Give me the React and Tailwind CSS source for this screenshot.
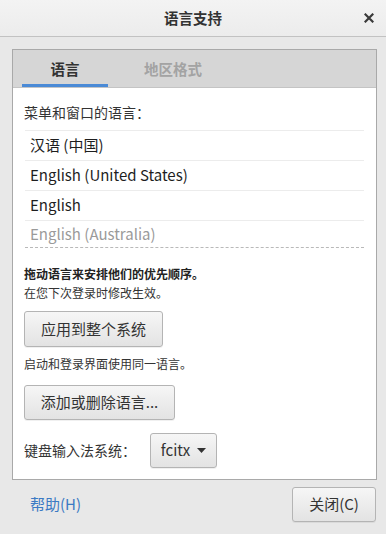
import React from "react";

const font = { fontFamily: '"Noto Sans CJK SC", "Noto Sans", sans-serif' };

function GtkButton({ className = "", children }) {
  return (
    <div
      className={
        "flex items-center justify-center rounded-[3px] border border-[#b4b4b4] bg-gradient-to-b from-[#f6f6f6] to-[#e3e3e3] text-[15px] text-[#333] shadow-[0_1px_0_rgba(0,0,0,0.06)] " +
        className
      }
    >
      {children}
    </div>
  );
}

export default function App() {
  const rows = ["汉语 (中国)", "English (United States)", "English"];
  return (
    <div style={font} className="w-[386px] h-[534px] bg-[#e8e8e8] flex flex-col text-[#2e2e2e] overflow-hidden">
      {/* title bar */}
      <div className="h-[37px] shrink-0 grid grid-cols-[1fr_auto_1fr] items-center border-b border-[#c2c2c2] bg-gradient-to-b from-[#f3f3f3] to-[#ececec]">
        <div />
        <div className="text-[14.5px] font-bold text-[#333] leading-none pt-[1px]">语言支持</div>
        <div className="flex justify-end pr-[12px]">
          <svg width="10" height="10" viewBox="0 0 10 10">
            <path d="M1.5 1.5 L8.5 8.5 M8.5 1.5 L1.5 8.5" stroke="#3a3a3a" strokeWidth="2.2" strokeLinecap="square" />
          </svg>
        </div>
      </div>

      {/* panel */}
      <div className="ml-[12px] mt-[12px] w-[365px] h-[431px] border border-[#a9a9a9] bg-white flex flex-col">
        {/* tabs */}
        <div className="h-[38px] shrink-0 bg-[#d6d6d6] border-b border-[#c4c4c4] flex items-stretch pl-[9px]">
          <div className="w-[86px] flex items-center justify-center border-b-[3px] border-[#4a8ad6] text-[14.5px] font-bold text-[#333] pt-[3px]">
            语言
          </div>
          <div className="ml-[36px] flex items-center text-[14.5px] font-bold text-[#a3a3a3]">地区格式</div>
        </div>

        {/* content */}
        <div className="flex flex-col pl-[11px] pr-[12px]">
          <div className="mt-[14px] text-[14px] leading-[20px] text-[#333]">菜单和窗口的语言：</div>
          <div className="mt-[8px] ml-[1px] flex flex-col">
            {rows.map((r) => (
              <div key={r} className="h-[30px] border-t border-[#ececec] flex items-center pl-[5px] text-[15px] text-[#1e1e1e]">
                {r}
              </div>
            ))}
            <div className="h-[28px] border-t border-[#ececec] border-b border-b-[#b9b9b9] flex items-center pl-[5px] text-[15px] text-[#9a9a9a]" style={{ borderBottomStyle: "dashed" }}>
              English (Australia)
            </div>
          </div>

          <div className="mt-[17px] text-[12px] leading-[17px] font-bold text-[#222]">拖动语言来安排他们的优先顺序。</div>
          <div className="mt-[2px] text-[12px] leading-[17px] text-[#333]">在您下次登录时修改生效。</div>

          <GtkButton className="mt-[10px] w-[139px] h-[36px]">应用到整个系统</GtkButton>

          <div className="mt-[8px] text-[12px] leading-[17px] text-[#333]">启动和登录界面使用同一语言。</div>

          <GtkButton className="mt-[13px] w-[151px] h-[35px]">添加或删除语言...</GtkButton>

          <div className="mt-[13px] flex items-center">
            <div className="text-[14px] text-[#333] w-[126px]">键盘输入法系统：</div>
            <GtkButton className="w-[67px] h-[35px] gap-[7px]">
              <span>fcitx</span>
              <svg width="9" height="5" viewBox="0 0 9 5">
                <path d="M0 0 L9 0 L4.5 5 Z" fill="#333" />
              </svg>
            </GtkButton>
          </div>
        </div>
      </div>

      {/* bottom bar */}
      <div className="flex items-center justify-between pl-[30px] pr-[10px] mt-[7px]">
        <span className="text-[15px] text-[#3b7ac4]">帮助(H)</span>
        <GtkButton className="w-[84px] h-[35px]">关闭(C)</GtkButton>
      </div>
    </div>
  );
}
